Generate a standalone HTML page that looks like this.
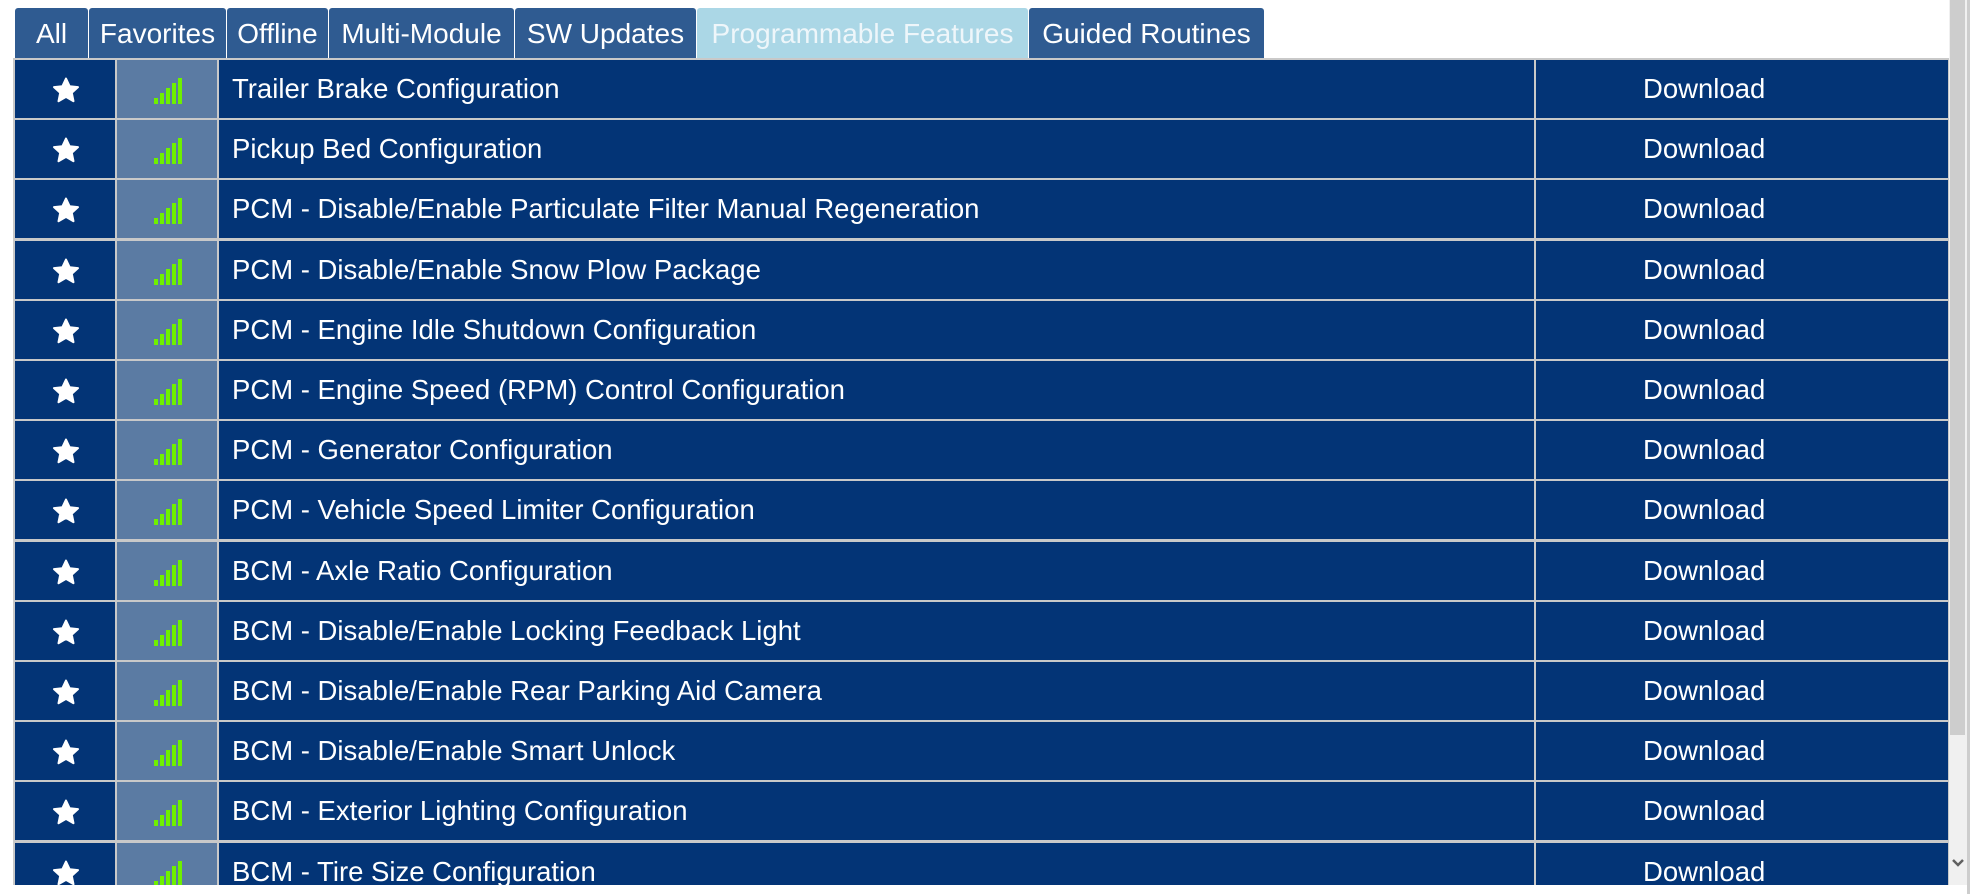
<!DOCTYPE html>
<html><head><style>
*{margin:0;padding:0;box-sizing:border-box}
body{width:1970px;height:894px;background:#fff;position:relative;overflow:hidden;font-family:"Liberation Sans",Arial,sans-serif}
.tab{position:absolute;top:8px;height:50px;background:#2f5b91;color:#fff;font-size:28px;line-height:52px;text-align:center;border-radius:3px 3px 0 0;white-space:nowrap}
.tab.act{background:#abd7e6;color:#eef6fa}
.tbl{position:absolute;left:13px;top:58px;width:1937px;height:827px;background:#c9c9c9;overflow:hidden}
.row{position:absolute;left:0;width:1937px;height:58px}
.c{position:absolute;top:0;height:58px;background:#033476;color:#fff;font-size:27.5px;line-height:58px;white-space:nowrap}
.c1{left:2px;width:100px}
.c2{left:104px;width:100px;background:#5b7ba3}
.c3{left:206px;width:1315px;padding-left:13px}
.c4{left:1523px;width:412px;padding-left:107px}
.star{position:absolute;left:37px;top:17px}
.sig{position:absolute;left:37px;top:16px}
</style></head><body>
<div class="tab" style="left:15px;width:73px">All</div>
<div class="tab" style="left:89px;width:137px">Favorites</div>
<div class="tab" style="left:227px;width:101px">Offline</div>
<div class="tab" style="left:329px;width:185px">Multi-Module</div>
<div class="tab" style="left:515px;width:181px">SW Updates</div>
<div class="tab act" style="left:697px;width:331px">Programmable Features</div>
<div class="tab" style="left:1029px;width:235px">Guided Routines</div>
<div style="position:absolute;left:13px;top:58px;width:1937px;height:2px;background:#e0e0e0"></div>
<div class="tbl" id="t"></div>
<div style="position:absolute;left:1949px;top:0;width:18px;height:885px;background:#f0f0f0"></div>
<div style="position:absolute;left:1950px;top:0;width:15px;height:735px;background:#cdcdcd"></div>
<div style="position:absolute;left:1967px;top:0;width:3px;height:894px;background:#cdcdcd"></div>
<svg style="position:absolute;left:1951px;top:858px" width="14" height="10"><path d="M2 2 L7 7 L12 2" stroke="#606060" stroke-width="2.5" fill="none"/></svg>
<script>
var n=["Trailer Brake Configuration","Pickup Bed Configuration","PCM - Disable/Enable Particulate Filter Manual Regeneration","PCM - Disable/Enable Snow Plow Package","PCM - Engine Idle Shutdown Configuration","PCM - Engine Speed (RPM) Control Configuration","PCM - Generator Configuration","PCM - Vehicle Speed Limiter Configuration","BCM - Axle Ratio Configuration","BCM - Disable/Enable Locking Feedback Light","BCM - Disable/Enable Rear Parking Aid Camera","BCM - Disable/Enable Smart Unlock","BCM - Exterior Lighting Configuration","BCM - Tire Size Configuration"];
var star='<svg class="star" width="28" height="26" viewBox="0 0 28 26"><path d="M14 1.5 L17.6 9.2 L26 10.1 L19.8 15.8 L21.5 24.2 L14 19.9 L6.5 24.2 L8.2 15.8 L2 10.1 L10.4 9.2 Z" fill="#fff" stroke="#fff" stroke-width="2" stroke-linejoin="round"/></svg>';
var sig='<svg class="sig" width="30" height="30"><rect x="0" y="22" width="4" height="6" fill="#6ef000"/><rect x="6" y="17" width="4" height="11" fill="#6ef000"/><rect x="12" y="12" width="4" height="16" fill="#6ef000"/><rect x="18" y="7" width="4" height="21" fill="#6ef000"/><rect x="24" y="2" width="4" height="26" fill="#6ef000"/></svg>';
var h="";
for(var i=0;i<n.length;i++){var t=Math.round(2+i*60.2);
h+='<div class="row" style="top:'+t+'px"><div class="c c1">'+star+'</div><div class="c c2">'+sig+'</div><div class="c c3">'+n[i]+'</div><div class="c c4">Download</div></div>';}
document.getElementById("t").innerHTML=h;
</script>
</body></html>
